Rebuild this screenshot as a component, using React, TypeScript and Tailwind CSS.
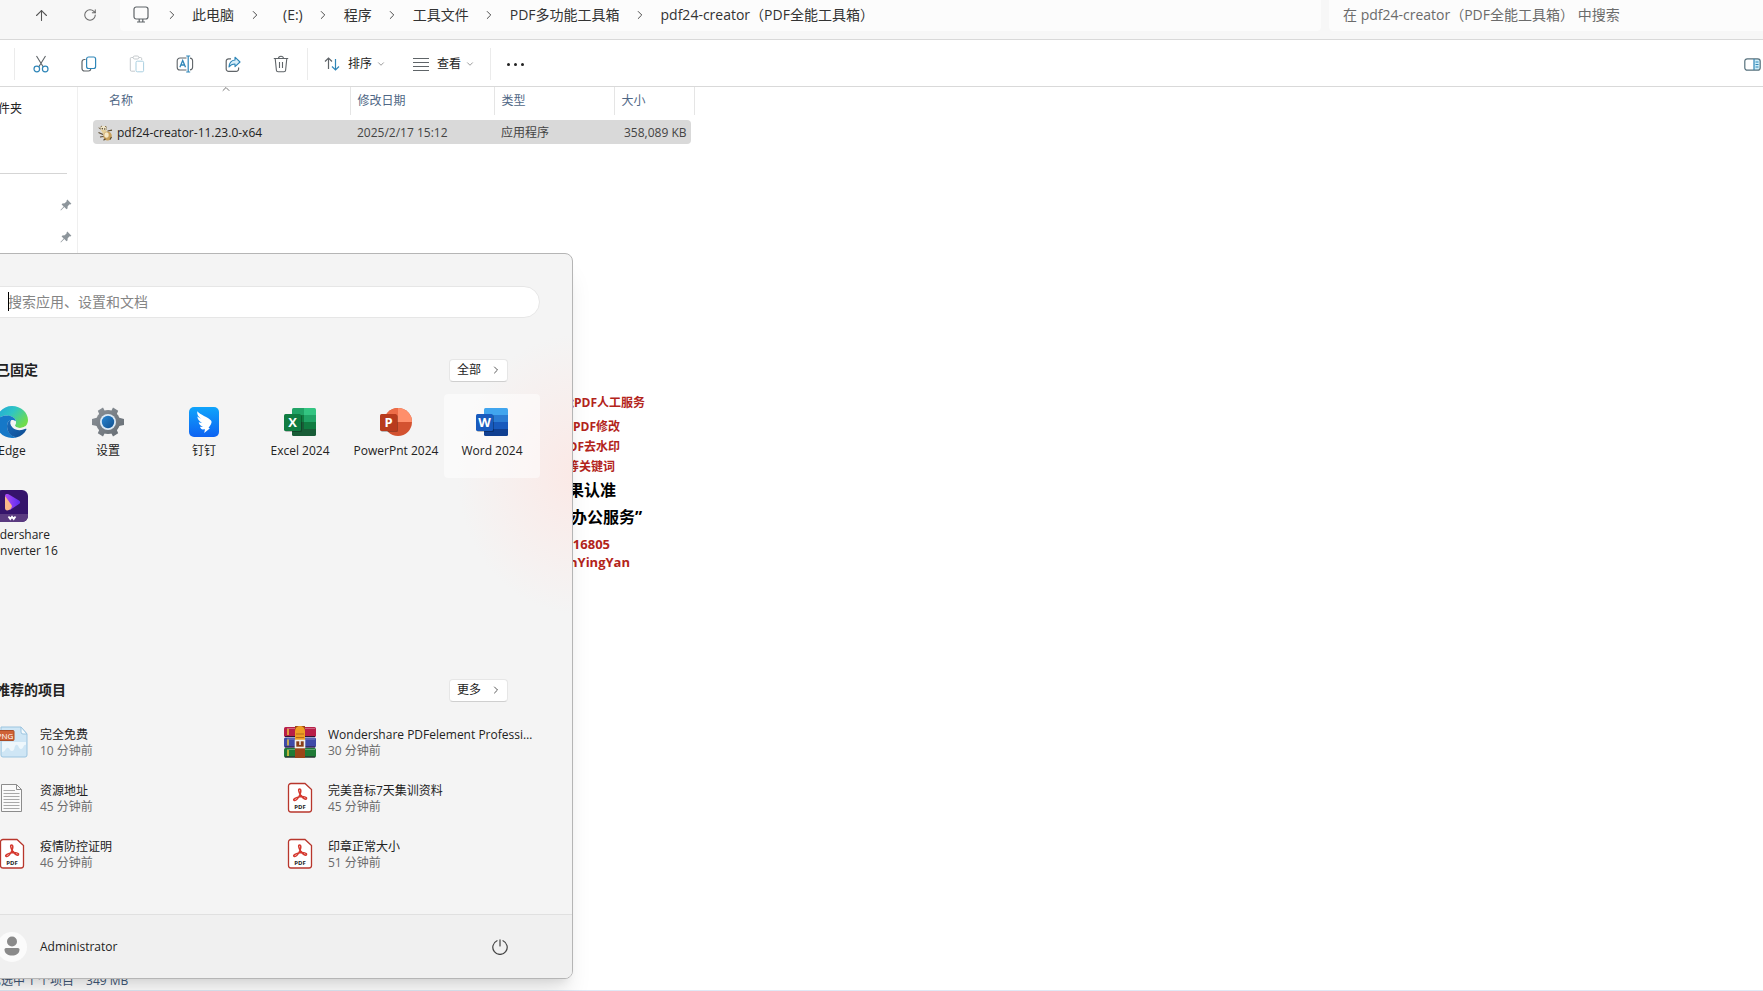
import type { ReactNode } from "react";
import {
  LuArrowUp,
  LuChevronDown,
  LuChevronRight,
  LuChevronUp,
  LuRotateCw,
} from "react-icons/lu";

const crumbs = [
  "此电脑",
  "(E:)",
  "程序",
  "工具文件",
  "PDF多功能工具箱",
  "pdf24-creator（PDF全能工具箱）",
];

function CutIcon() {
  return (
    <svg width="16" height="18" viewBox="0 0 16 18" fill="none">
      <path d="M3.5 1 10.3 12M12.5 1 5.7 12" stroke="#5f6468" strokeWidth="1.1" />
      <circle cx="3.8" cy="14" r="2.8" stroke="#2f86b8" strokeWidth="1.2" />
      <circle cx="12.2" cy="14" r="2.8" stroke="#2f86b8" strokeWidth="1.2" />
    </svg>
  );
}

function CopyIcon() {
  return (
    <svg width="16" height="16" viewBox="0 0 16 16" fill="none">
      <path
        d="M4.5 3.5H3.3A2.3 2.3 0 0 0 1 5.8V12.5A2.5 2.5 0 0 0 3.5 15H7.5A2.3 2.3 0 0 0 9.8 13"
        stroke="#5f6468"
        strokeWidth="1.2"
      />
      <rect x="5.6" y="1" width="9" height="11.5" rx="2" stroke="#2f86b8" strokeWidth="1.2" />
    </svg>
  );
}

function PasteIcon() {
  return (
    <svg width="16" height="18" viewBox="0 0 16 18" fill="none">
      <path d="M4 2.5H2.5A1.2 1.2 0 0 0 1.3 3.7V15A1.2 1.2 0 0 0 2.5 16.2H6M10 2.5H11.5A1.2 1.2 0 0 1 12.7 3.7V5" stroke="#c4c9cc" />
      <rect x="4.2" y="1" width="5.6" height="3" rx="1.5" stroke="#c4c9cc" />
      <rect x="7" y="6.2" width="7.6" height="10.6" rx="1.3" stroke="#a9cfe0" />
    </svg>
  );
}

function RenameIcon() {
  return (
    <svg width="18" height="18" viewBox="0 0 18 18" fill="none">
      <path d="M10.5 3H4A2.8 2.8 0 0 0 1.2 5.8V12.2A2.8 2.8 0 0 0 4 15H10.5M14 3.1A2.8 2.8 0 0 1 16.6 5.8V12.2A2.8 2.8 0 0 1 14 14.9" stroke="#5f6468" strokeWidth="1.1" />
      <path d="M12.2 1.2V16.8M10.2 1H14.2M10.2 17H14.2" stroke="#2f86b8" strokeWidth="1.2" />
      <path d="M3.9 12.3 6.7 5.5 9.5 12.3M4.9 10H8.5" stroke="#2f86b8" strokeWidth="1.3" />
    </svg>
  );
}

function ShareIcon() {
  return (
    <svg width="16" height="17" viewBox="0 0 16 17" fill="none">
      <path d="M6 2.8H3.6A2.4 2.4 0 0 0 1.2 5.2V13A2.4 2.4 0 0 0 3.6 15.4H11.2A2.4 2.4 0 0 0 13.6 13V11.5" stroke="#5f6468" strokeWidth="1.2" />
      <path d="M10 1.2 15 6 10 10.6V8C7.2 8 5.5 8.8 4 11 4.2 7 6.4 4.4 10 4Z" fill="#d5edf9" stroke="#2f86b8" strokeWidth="1.1" strokeLinejoin="round" />
    </svg>
  );
}

function TrashIcon() {
  return (
    <svg width="16" height="18" viewBox="0 0 16 18" fill="none" stroke="#5f6468" strokeWidth="1.1">
      <path d="M.8 3.5H15.2M5.5 3.5A2.5 2.3 0 0 1 10.5 3.5M2.2 3.5 3.4 15.2A1.7 1.7 0 0 0 5.1 16.8H10.9A1.7 1.7 0 0 0 12.6 15.2L13.8 3.5M6.5 7V13M9.5 7V13" />
    </svg>
  );
}

function SortIcon() {
  return (
    <svg width="16" height="16" viewBox="0 0 16 16" fill="none" strokeWidth="1.2">
      <path d="M4.5 13V2M1 5.5 4.5 2 8 5.5" stroke="#5f6468" />
      <path d="M11.5 3V14M8 10.5 11.5 14 15 10.5" stroke="#2f86b8" />
    </svg>
  );
}

function ListIcon() {
  return (
    <svg width="16" height="13" viewBox="0 0 16 13" stroke="#5f6468">
      <path d="M0 .5H16M0 4.5H16M0 8.5H16M0 12.5H16" />
    </svg>
  );
}

function PaneIcon() {
  return (
    <svg width="17" height="13" viewBox="0 0 17 13" fill="none">
      <path d="M10 1H13.5A2.5 2.5 0 0 1 16 3.5V9.5A2.5 2.5 0 0 1 13.5 12H10Z" fill="#cdeefa" />
      <rect x=".8" y=".8" width="15.4" height="11.4" rx="2.5" stroke="#56707c" strokeWidth="1.2" />
      <path d="M10 1V12" stroke="#2f86b8" strokeWidth="1.2" />
      <path d="M11.5 4H14.5M11.5 6.5H14.5M11.5 9H14.5" stroke="#2f86b8" />
    </svg>
  );
}

function MonitorIcon() {
  return (
    <svg width="16" height="18" viewBox="0 0 16 18" fill="none" stroke="#5f6468" strokeWidth="1.2">
      <rect x="1" y="1" width="14" height="12" rx="2.2" />
      <path d="M6.2 13V15.8M9.8 13V15.8M4 16H12" />
    </svg>
  );
}

function PinIcon() {
  return (
    <svg width="12" height="12" viewBox="0 0 12 12" fill="#8d959b">
      <path d="M7.3.6 11.4 4.7 10.3 5.4 9.6 5.3 7.7 7.3 7.5 9.6 6.5 10.3 4.3 8.1.9 11.4.5 11 3.7 7.5 1.6 5.4 2.4 4.5 4.7 4.3 6.7 2.3 6.6 1.5Z" />
    </svg>
  );
}

function SheepIcon() {
  return (
    <svg width="16" height="16" viewBox="0 0 16 16">
      <path d="M1 2.5 5 3.2 4 5ZM9 1 7.5 4 10 5Z" fill="#6b5a3a" />
      <circle cx="6.5" cy="4" r="3" fill="#f1e6c8" />
      <path d="M4 5 9 5 10 9 6 9Z" fill="#e3cf9b" />
      <ellipse cx="10.5" cy="11" rx="4.3" ry="4.5" fill="#c9a15c" />
      <ellipse cx="9.5" cy="10" rx="2.2" ry="2.8" fill="#f6e8c6" />
      <path d="M1.5 7.5 6 9.5M3 12 6.5 11.5M6.5 15.3 8.5 13.8M10.5 6 15 5.2M13 14.5 14.5 12" stroke="#5b4a30" strokeWidth="1.2" />
      <path d="M3.5 2 5 1M8 1.2 9.5 2.2" stroke="#8a744a" />
      <circle cx="5.3" cy="3.8" r=".7" fill="#3a2d1b" />
      <circle cx="7.8" cy="4" r=".7" fill="#3a2d1b" />
    </svg>
  );
}

function EdgeIcon() {
  return (
    <svg width="32" height="32" viewBox="0 0 32 32">
      <defs>
        <linearGradient id="edge-top" x1="0" y1="0" x2="1" y2=".6">
          <stop offset="0" stopColor="#1fa3dc" />
          <stop offset=".5" stopColor="#2fc5c4" />
          <stop offset="1" stopColor="#6fdc4c" />
        </linearGradient>
        <linearGradient id="edge-low" x1="0" y1="0" x2="1" y2="1">
          <stop offset="0" stopColor="#1b6fc0" />
          <stop offset="1" stopColor="#0e4a8f" />
        </linearGradient>
      </defs>
      <path d="M0 15C1 6 8 0 16 0 25 0 32 6.5 32 14 32 19 28.5 22 24 22 21 22 19 21 19 19.5 19 18.5 20 18 20 16 20 12.5 16 9.5 11 9.5 6 9.5 2 11.5 0 15Z" fill="url(#edge-top)" />
      <path d="M0 15C2 11.5 6 9.5 11 9.5 15.5 9.5 19.5 12 20 15.5 17 12.5 11 14 11 20 11 26 16 31 21 31.2 19.5 31.8 18 32 16 32 7 32-.5 25 0 15Z" fill="#1678c8" />
      <path d="M11 20C11 16.5 13 14.2 15.5 13.8 13.5 16 14 19 16.5 21.5 19.5 24.5 25 25 29.5 22.8 30.3 22.4 30.7 23 30.3 23.7 28.3 27.5 25 30.3 21 31.3 15 31 11 26 11 20Z" fill="url(#edge-low)" />
      <path d="M20 15.5C20.2 17.5 19 18.300 19 19.500 19 21 21 22 24 22 26.500 22 28.500 21 30 19.800 28 23.500 22 24.500 18 21.500 15.500 19.500 15.500 15.500 20 15.500Z" fill="#f4f4f4" />
    </svg>
  );
}

function GearIcon() {
  return (
    <svg width="32" height="32" viewBox="0 0 32 32">
      <defs>
        <linearGradient id="gear" x1="0" y1="0" x2="1" y2="1">
          <stop offset="0" stopColor="#8d9399" />
          <stop offset="1" stopColor="#646b72" />
        </linearGradient>
        <linearGradient id="gear-core" x1="0" y1="0" x2="1" y2="1">
          <stop offset="0" stopColor="#2a86d2" />
          <stop offset="1" stopColor="#10508f" />
        </linearGradient>
      </defs>
      <g fill="url(#gear)">
        <circle cx="16" cy="16" r="12" />
        <path d="M12.8 5 16 7 19.2 5 21 1.6 26.2 4.7 24.6 8.5 24.6 11 28.3 12 32 13V19L28.3 19.8 24.6 21 24.6 23.5 26.2 27.3 21 30.4 19.2 27 16 26 12.8 27 11 30.4 5.8 27.3 7.4 23.5 7.4 21 3.7 19.8 0 19V13L3.7 12 7.4 11 7.4 8.5 5.8 4.7 11 1.6Z" />
      </g>
      <circle cx="16" cy="16" r="8" fill="#dceaf6" />
      <circle cx="16" cy="16" r="6.2" fill="url(#gear-core)" />
    </svg>
  );
}

function DingIcon() {
  return (
    <svg width="32" height="32" viewBox="0 0 32 32">
      <defs>
        <linearGradient id="ding" x1="0" y1="0" x2="0" y2="1">
          <stop offset="0" stopColor="#0fa4fb" />
          <stop offset="1" stopColor="#0d62f2" />
        </linearGradient>
      </defs>
      <rect x="1" y="1" width="30" height="30" rx="5" fill="url(#ding)" />
      <path d="M9.3 5.3C12 8.8 20 11.2 23 14.5 24 15.6 23.6 17 22.8 18.4L20.5 22 22 22.2 16.2 27 17 23.2 14.5 23.5C13 23 12.2 21.8 12 20.8L15 21C12.5 20 11 18.2 10.7 16.3L14 17C11 15 9.5 13 9.3 10.5L13 12.8C10 10.5 8.8 8 9.3 5.3Z" fill="#fff" />
    </svg>
  );
}

function OfficeLetter({ letter, color }: { letter: string; color: string }) {
  return (
    <>
      <rect x="1" y="9" width="17" height="17" rx="1.5" fill="#000" opacity=".25" />
      <rect x="0" y="8" width="17" height="17" rx="1.5" fill={color} />
      <text x="8.5" y="21" textAnchor="middle" fontSize="13" fontWeight="700" fill="#fff">
        {letter}
      </text>
    </>
  );
}

function ExcelIcon() {
  return (
    <svg width="32" height="32" viewBox="0 0 32 32">
      <path d="M8 3.5A1.5 1.5 0 0 1 9.5 2H20V9H8Z" fill="#21a366" />
      <path d="M20 2H30.5A1.5 1.5 0 0 1 32 3.5V9H20Z" fill="#33c481" />
      <path d="M8 9H20V16H8Z" fill="#107c41" />
      <path d="M20 9H32V16H20Z" fill="#21a366" />
      <path d="M8 16H20V23H8Z" fill="#185c37" />
      <path d="M20 16H32V23H20Z" fill="#107c41" />
      <path d="M8 23H32V28.5A1.5 1.5 0 0 1 30.5 30H9.5A1.5 1.5 0 0 1 8 28.5Z" fill="#185c37" />
      <OfficeLetter letter="X" color="#107c41" />
    </svg>
  );
}

function PowerPointIcon() {
  return (
    <svg width="32" height="32" viewBox="0 0 32 32">
      <circle cx="18" cy="16" r="14" fill="#d35230" />
      <path d="M18 2A14 14 0 0 0 4 16H18Z" fill="#ed6c47" />
      <path d="M18 2A14 14 0 0 1 32 16H18Z" fill="#ff8f6b" />
      <OfficeLetter letter="P" color="#b83b1d" />
    </svg>
  );
}

function WordIcon() {
  return (
    <svg width="32" height="32" viewBox="0 0 32 32">
      <path d="M8 3.5A1.5 1.5 0 0 1 9.5 2H30.5A1.5 1.5 0 0 1 32 3.5V9H8Z" fill="#41a5ee" />
      <path d="M8 9H32V16H8Z" fill="#2b7cd3" />
      <path d="M8 16H32V23H8Z" fill="#185abd" />
      <path d="M8 23H32V28.5A1.5 1.5 0 0 1 30.5 30H9.5A1.5 1.5 0 0 1 8 28.5Z" fill="#103f91" />
      <OfficeLetter letter="W" color="#185abd" />
    </svg>
  );
}

function UniConverterIcon() {
  return (
    <svg width="32" height="32" viewBox="0 0 32 32">
      <defs>
        <linearGradient id="uni" x1="0" y1="0" x2="1" y2="0">
          <stop offset="0" stopColor="#b04bf5" />
          <stop offset="1" stopColor="#5a2cf0" />
        </linearGradient>
      </defs>
      <rect width="32" height="32" rx="6" fill="#35146b" />
      <path d="M0 24H32V26A6 6 0 0 1 26 32H6A6 6 0 0 1 0 26Z" fill="#5a3a80" />
      <path d="M9 6C9 4 11 3.5 13 4.5L23 10.5C24.5 11.5 24.5 13 23 14L14 20Z" fill="url(#uni)" />
      <path d="M9 6 15.5 15C16.5 17 15 19 13 20 10.5 21 9 20 9 18Z" fill="#fbb98a" />
      <path d="M12.5 26.5 14.3 29 16 26.8 17.7 29 19.5 26.5" fill="none" stroke="#fff" strokeWidth="1.8" />
    </svg>
  );
}

function PngIcon() {
  return (
    <svg width="32" height="32" viewBox="0 0 32 32">
      <path d="M5 1H25L31 8V29A2 2 0 0 1 29 31H7A2 2 0 0 1 5 29Z" fill="#cfe6f5" stroke="#9cc5e0" />
      <path d="M25 1V6A2 2 0 0 0 27 8H31Z" fill="#f4fafd" stroke="#9cc5e0" />
      <path d="M6 16H30V19C27 18 28 23 25 23 22 23 23 18 20 19 18 20 19 25 16 25 13 25 14 21 11 22 9 23 9 26 6 26Z" fill="#eef7fc" />
      <rect x="-2" y="4.5" width="20" height="10" rx="1" fill="#cf6236" stroke="#a94c27" />
      <text x="9" y="12.5" textAnchor="middle" fontSize="8" fill="#fff">
        PNG
      </text>
    </svg>
  );
}

function TextFileIcon() {
  return (
    <svg width="32" height="32" viewBox="0 0 32 32">
      <path d="M5.5 2.5H20.5L25.5 7.5V29.5H5.5Z" fill="#fafafa" stroke="#8c8c8c" />
      <path d="M20.5 2.5V7.5H25.5" fill="none" stroke="#8c8c8c" />
      <path d="M7.5 8.5H19M7.5 11.5H23.5M7.5 14.5H23.5M7.5 17.5H23.5M7.5 20.5H23.5M7.5 23.5H23.5M7.5 26.5H23.5" stroke="#a9a9a9" />
    </svg>
  );
}

function PdfIcon() {
  return (
    <svg width="32" height="32" viewBox="0 0 32 32">
      <path d="M7 1.5H21L27.5 7.5V27.5A2.5 2.5 0 0 1 25 30H7A2.5 2.5 0 0 1 4.5 27.5V4A2.5 2.5 0 0 1 7 1.5Z" fill="#fff" stroke="#b8362c" strokeWidth="1.3" />
      <path d="M15.5 7C17.5 7 17 10.5 15.5 13.5 14 16.5 11.5 19 10 18.3 8.5 17.3 12 15.3 16 14.7 19.5 14.2 23 15 22.5 16.7 21.8 18.2 18.5 16 16.5 13 14.7 10.3 14 7 15.5 7Z" fill="none" stroke="#d5392f" strokeWidth="1.5" />
      <text x="16" y="26.5" textAnchor="middle" fontSize="6" fontWeight="700" fill="#222">
        PDF
      </text>
    </svg>
  );
}

function RarIcon() {
  return (
    <svg width="32" height="32" viewBox="0 0 32 32">
      <rect y="1" width="32" height="10" rx="1.5" fill="#b81f48" />
      <rect y="11.5" width="32" height="10" rx="1.5" fill="#3f4aa8" />
      <rect y="22" width="32" height="9.5" rx="1.5" fill="#1f7a36" />
      <path d="M3 2.5H31M3 13H31M3 23.5H31" stroke="#fff" opacity=".3" />
      <path d="M1 10.5H31M1 21H31M1 31H31" stroke="#2c1730" />
      <path d="M4 3V9M4 13.5V19.5M4 24V30" stroke="#f0c63c" strokeWidth="1.5" />
      <rect x="11" y="0" width="10" height="32" fill="#9c4518" />
      <path d="M11 5A5 5 0 0 1 21 5V15H11Z" fill="#ee9f24" />
      <path d="M12 8H20M12 11.5H20" stroke="#b4691a" />
      <rect x="11.5" y="14.5" width="9" height="7" fill="#8a3d18" stroke="#f3f0ea" strokeWidth="1.6" />
      <path d="M16 14V19" stroke="#f3f0ea" strokeWidth="1.5" />
    </svg>
  );
}

const pinned = [
  { name: "Edge", icon: <EdgeIcon /> },
  { name: "设置", icon: <GearIcon /> },
  { name: "钉钉", icon: <DingIcon /> },
  { name: "Excel 2024", icon: <ExcelIcon /> },
  { name: "PowerPnt 2024", icon: <PowerPointIcon /> },
  { name: "Word 2024", icon: <WordIcon />, active: true },
  { name: "Wondershare UniConverter 16", icon: <UniConverterIcon /> },
];

const recommended = [
  { name: "完全免费", time: "10 分钟前", icon: <PngIcon /> },
  { name: "Wondershare PDFelement Professional", time: "30 分钟前", icon: <RarIcon /> },
  { name: "资源地址", time: "45 分钟前", icon: <TextFileIcon /> },
  { name: "完美音标7天集训资料", time: "45 分钟前", icon: <PdfIcon /> },
  { name: "疫情防控证明", time: "46 分钟前", icon: <PdfIcon /> },
  { name: "印章正常大小", time: "51 分钟前", icon: <PdfIcon /> },
];

const commands = [
  { label: "剪切", icon: <CutIcon /> },
  { label: "复制", icon: <CopyIcon /> },
  { label: "粘贴", icon: <PasteIcon /> },
  { label: "重命名", icon: <RenameIcon /> },
  { label: "共享", icon: <ShareIcon /> },
  { label: "删除", icon: <TrashIcon /> },
];

function AddressBar() {
  return (
    <header className="flex h-10 shrink-0 border-b border-[#d9d9d9] bg-[#f7f7f7] pb-2 text-sm text-[#333]">
      <button aria-label="上移" className="ml-4 flex h-[30px] w-[50px] items-center justify-center text-[#555]">
        <LuArrowUp size={17} strokeWidth={1.5} />
      </button>
      <button aria-label="刷新" className="mr-[6px] flex h-[30px] w-12 items-center justify-center text-[#666]">
        <LuRotateCw size={14} strokeWidth={1.75} />
      </button>
      <nav className="flex flex-1 items-center rounded-b bg-[#fcfcfc] pb-[2px] pl-[13px]">
        <span className="mr-[2px]">
          <MonitorIcon />
        </span>
        {crumbs.map((crumb) => (
          <div key={crumb} className="flex items-center">
            <span className="flex w-[41px] justify-center">
              <LuChevronRight size={14} strokeWidth={1.5} />
            </span>
            <button className={crumb === "(E:)" ? "pl-2" : ""}>{crumb}</button>
          </div>
        ))}
      </nav>
      <input
        aria-label="搜索"
        placeholder="在 pdf24-creator（PDF全能工具箱） 中搜索"
        className="ml-2 w-[434px] rounded-bl bg-[#fcfcfc] px-[14px] pb-[2px] outline-none placeholder:text-[#6b6b6b]"
      />
    </header>
  );
}

function Divider() {
  return <span className="block h-8 w-px bg-[#ebebeb]" />;
}

function CommandBar() {
  return (
    <div className="flex h-[47px] shrink-0 items-center border-b border-[#d9d9d9] bg-white pt-[2px] pl-[14px] text-xs text-[#222]">
      <Divider />
      <div className="mx-[2px] flex">
        {commands.map(({ label, icon }) => (
          <button key={label} aria-label={label} className="flex w-12 items-center justify-center">
            {icon}
          </button>
        ))}
      </div>
      <Divider />
      <button className="ml-4 flex items-center">
        <SortIcon />
        <span className="mr-1 ml-2">排序</span>
        <LuChevronDown size={10} className="text-[#888]" />
      </button>
      <button className="ml-[27px] flex items-center">
        <ListIcon />
        <span className="mr-1 ml-2">查看</span>
        <LuChevronDown size={10} className="text-[#888]" />
      </button>
      <span className="mr-4 ml-[15px]">
        <Divider />
      </span>
      <button aria-label="更多" className="flex gap-[4px]">
        <span className="h-[3px] w-[3px] rounded-full bg-[#222]" />
        <span className="h-[3px] w-[3px] rounded-full bg-[#222]" />
        <span className="h-[3px] w-[3px] rounded-full bg-[#222]" />
      </button>
      <button aria-label="预览窗格" className="mr-[2px] ml-auto">
        <PaneIcon />
      </button>
    </div>
  );
}

function FileTable() {
  return (
    <table className="w-[602px] table-fixed text-left text-xs text-[#222]">
      <thead className="text-[#4f6785]">
        <tr className="h-7">
          <th className="relative w-[257px] border-r border-[#e5e5e5] pl-4 font-normal">
            <LuChevronUp size={12} className="absolute -top-1 left-[127px] text-[#777]" />
            名称
          </th>
          <th className="w-36 border-r border-[#e5e5e5] pl-[7px] font-normal">修改日期</th>
          <th className="w-[120px] border-r border-[#e5e5e5] pl-[7px] font-normal">类型</th>
          <th className="border-r border-[#e5e5e5] pl-[7px] font-normal">大小</th>
        </tr>
        <tr className="h-[5px]" />
      </thead>
      <tbody>
        <tr className="h-6">
          <td className="p-0">
            <div className="flex h-6 items-center gap-1 rounded-l-sm bg-[#d9d9d9] pt-px pl-1">
              <SheepIcon />
              pdf24-creator-11.23.0-x64
            </div>
          </td>
          <td className="bg-[#d9d9d9] pt-px pl-[7px] text-[#444]">2025/2/17 15:12</td>
          <td className="bg-[#d9d9d9] pt-px pl-[7px] text-[#444]">应用程序</td>
          <td className="pr-1">
            <div className="h-6 rounded-r-sm bg-[#d9d9d9] pt-px pr-1 text-right leading-6 text-[#444]">358,089 KB</div>
          </td>
        </tr>
      </tbody>
    </table>
  );
}

function Notice() {
  return (
    <div className="mt-[249px] ml-[442px] flex flex-col font-bold text-[#b3241b]">
      <p className="w-[110px] pb-1 text-right text-xs leading-5">能PDF人工服务</p>
      <p className="w-[85px] text-right text-xs leading-5">PDF修改</p>
      <p className="w-[85px] text-right text-xs leading-5">PDF去水印</p>
      <p className="w-20 text-right text-xs leading-5">等关键词</p>
      <p className="w-[81px] text-right text-base leading-[26px] text-black">效果认准</p>
      <p className="w-[107px] pb-1 text-right text-base leading-7 text-black">办公服务”</p>
      <p className="w-[75px] text-right text-[13px] leading-[18px]">16805</p>
      <p className="w-[95px] text-right text-[13px] leading-[18px]">nYingYan</p>
    </div>
  );
}

function Sidebar() {
  return (
    <aside className="w-[78px] shrink-0 border-r border-[#efefef] text-xs text-[#222]">
      <p className="-ml-[14px] pt-[14px] leading-4">文件夹</p>
      <hr className="mt-[56px] mr-[10px] border-[#d5d5d5]" />
      <div className="mt-[15px] flex flex-col items-end pr-[5px]">
        <span className="flex h-8 items-center">
          <PinIcon />
        </span>
        <span className="flex h-8 items-center">
          <PinIcon />
        </span>
      </div>
    </aside>
  );
}

function SectionHeader({ title, action }: { title: string; action: string }) {
  return (
    <div className="flex h-6 items-center justify-between px-8">
      <h2 className="pb-px text-sm font-semibold text-[#222]">{title}</h2>
      <button className="flex h-[23px] w-[59px] items-center justify-between rounded border border-[#e6e6e6] border-b-[#cfcfcf] bg-white pr-[5px] pl-[7px] text-xs">
        {action}
        <LuChevronRight size={12} strokeWidth={1.5} />
      </button>
    </div>
  );
}

function Tile({ name, icon, active }: { name: string; icon: ReactNode; active?: boolean }) {
  return (
    <button
      className={`flex h-21 flex-col items-center rounded pt-3 ${active ? "bg-white/50" : ""}`}
    >
      {icon}
      <span className="mt-[5px] text-xs leading-4">{name}</span>
    </button>
  );
}

function StartMenu() {
  return (
    <section className="absolute top-[253px] -left-[69px] flex w-[642px] flex-col overflow-hidden rounded-lg border border-[#b5b5b5] bg-[#f4f4f4] bg-[radial-gradient(ellipse_120px_140px_at_645px_220px,#fbe9e6,transparent)] text-[#222] shadow-xl">
      <div className="px-8 pt-8">
        <input
          aria-label="搜索"
          placeholder="搜索应用、设置和文档"
          className="h-8 w-full rounded-full border border-[#e6e6e6] bg-white pb-[2px] pl-[43px] text-sm outline-none placeholder:text-[#858585]"
        />
        <span className="absolute top-[38px] left-[76px] h-[19px] w-px bg-black" />
      </div>
      <div className="mt-[40px] px-8">
        <SectionHeader title="已固定" action="全部" />
        <div className="mt-3 grid h-[252px] auto-rows-min grid-cols-6">
          {pinned.map((app) => (
            <Tile key={app.name} {...app} />
          ))}
        </div>
      </div>
      <div className="mt-8 px-8">
        <SectionHeader title="推荐的项目" action="更多" />
        <ul className="mt-3 grid grid-cols-2">
          {recommended.map(({ name, time, icon }) => (
            <li key={name} className="flex h-14 items-center gap-3 pr-1 pl-8">
              <span className="shrink-0">{icon}</span>
              <div className="min-w-0 pt-[2px] text-xs leading-4">
                <p className="truncate">{name}</p>
                <p className="text-[#6b6b6b]">{time}</p>
              </div>
            </li>
          ))}
        </ul>
      </div>
      <footer className="mt-8 flex h-16 items-center justify-between border-t border-[#e0e0e0] bg-[#f0f0f0] px-16">
        <button className="flex items-center gap-3 text-xs">
          <svg width="32" height="32" viewBox="0 0 32 32">
            <circle cx="16" cy="16" r="15" fill="#fbfbfb" />
            <circle cx="16" cy="10.5" r="5" fill="#8a8a8a" />
            <path d="M8.5 18.5A1.5 1.5 0 0 1 10 17H22A1.5 1.5 0 0 1 23.5 18.5C23.5 22.5 20 24.5 16 24.5S8.5 22.5 8.5 18.5Z" fill="#8a8a8a" />
          </svg>
          Administrator
        </button>
        <button aria-label="电源">
          <svg width="16" height="16" viewBox="0 0 16 16" fill="none" stroke="#444" strokeWidth="1.2" strokeLinecap="round">
            <path d="M8 .8V7M5 1.7A7.2 7.2 0 1 0 11 1.7" />
          </svg>
        </button>
      </footer>
    </section>
  );
}

export default function App() {
  return (
    <div className="relative flex h-screen flex-col overflow-hidden bg-white font-['Open_Sans','Noto_Sans_CJK_SC',sans-serif]">
      <AddressBar />
      <CommandBar />
      <div className="flex min-h-0 flex-1">
        <Sidebar />
        <main className="pl-[15px]">
          <FileTable />
          <Notice />
        </main>
      </div>
      <div className="-ml-[11px] flex h-[18px] shrink-0 gap-3 border-b border-[#dfe9f5] text-xs leading-4 text-[#3f5878]">
        <span>已选中 1 个项目</span>
        <span>349 MB</span>
      </div>
      <StartMenu />
    </div>
  );
}
